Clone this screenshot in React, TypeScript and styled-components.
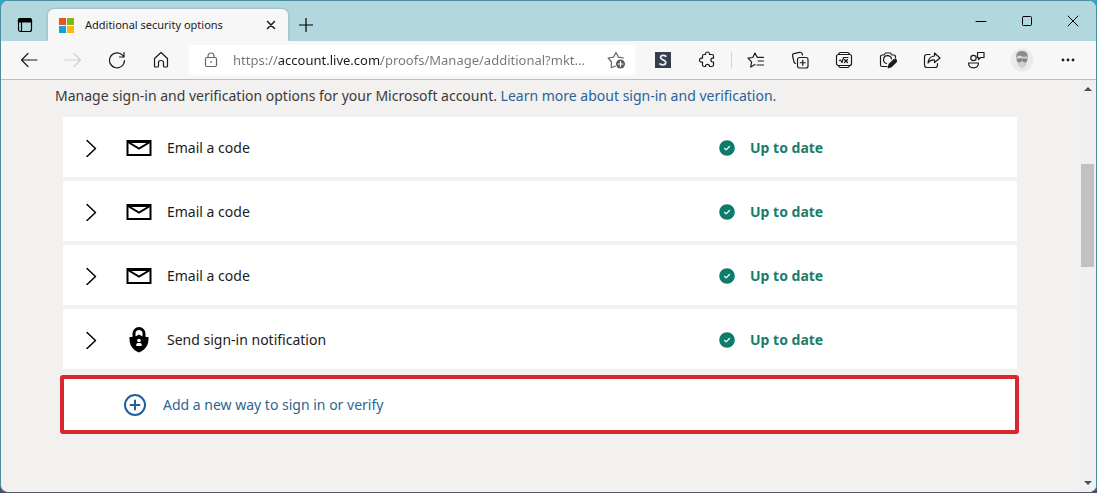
import React from "react";
import styled, { createGlobalStyle } from "styled-components";

const GlobalStyle = createGlobalStyle`
  *, *::before, *::after { box-sizing: border-box; }
  body {
    margin: 0;
    background: linear-gradient(#2fa9d0, #3f6f86 50%, #4b5068);
    font-family: "Noto Sans", "Open Sans", sans-serif;
    font-size: 14px;
    line-height: 20px;
    color: #1b1b1b;
  }
  button {
    font: inherit;
    color: inherit;
    border: 0;
    padding: 0;
    background: none;
  }
  svg { display: block; flex: none; }
`;

const BrowserWindow = styled.div`
  min-height: 100vh;
  display: flex;
  flex-direction: column;
  overflow: hidden;
  border: 1px solid #4a8ea0;
  border-bottom-color: #55566c;
  border-radius: 8px;
  background: #f2f1f0;
`;

const TitleBar = styled.header`
  display: flex;
  align-items: flex-end;
  height: 40px;
  background: #b2d7df;
`;

const TitleButton = styled.button<{ $width: number }>`
  display: flex;
  align-items: center;
  justify-content: center;
  width: ${(p) => p.$width}px;
  height: 32px;
`;

const Tab = styled.div`
  display: flex;
  align-items: center;
  width: 240px;
  height: 32px;
  padding: 0 8px 0 11px;
  border-radius: 6px 6px 0 0;
  background: #f7f7f7;
  box-shadow: 0 0 3px rgba(0, 60, 80, 0.3);
`;

const TabTitle = styled.span`
  flex: 1;
  margin-left: 11px;
  font-size: 11px;
  line-height: 16px;
  white-space: nowrap;
`;

const TabClose = styled.button`
  display: flex;
  align-items: center;
  justify-content: center;
  width: 18px;
  height: 18px;
`;

const WindowControls = styled.div`
  display: flex;
  align-self: flex-start;
  height: 40px;
  margin-left: auto;
`;

const WindowButton = styled.button`
  display: flex;
  align-items: center;
  justify-content: center;
  width: 46px;
  height: 40px;
`;

const Toolbar = styled.nav`
  display: flex;
  align-items: center;
  height: 39px;
  padding: 0 6px;
  border-bottom: 1px solid #b5c0c0;
  background: #f7f7f7;
`;

const ToolButton = styled.button`
  display: flex;
  align-items: center;
  justify-content: center;
  flex: none;
  width: 44px;
  height: 32px;
`;

const Divider = styled.span`
  width: 1px;
  height: 16px;
  margin: 0 2px;
  background: #d4d4d4;
`;

const AccountGroup = styled.div`
  display: flex;
  gap: 2px;
  margin-left: 2px;
`;

const AddressBar = styled.div`
  display: flex;
  align-items: center;
  flex: 1;
  min-width: 0;
  height: 30px;
  margin: 0 6px;
  padding: 0 10px 0 14px;
  border-radius: 4px;
  background: #ffffff;
`;

const AddressInput = styled.input`
  flex: 1;
  min-width: 0;
  margin: 0 10px 0 14px;
  padding: 0;
  border: 0;
  outline: 0;
  font: inherit;
  font-size: 13px;
  color: transparent;
  background: linear-gradient(to right, #757575 45px, #1b1b1b 45px 148px, #757575 148px);
  background-clip: text;
  -webkit-background-clip: text;
`;

const IconButton = styled.button`
  display: flex;
`;

const Viewport = styled.div`
  display: flex;
  flex: 1;
`;

const Page = styled.main`
  flex: 1;
  min-width: 0;
  padding: 6px 62px 58px;
`;

const Intro = styled.p`
  margin: 0 -8px 11px;
  color: #3b3a39;
`;

const Link = styled.a`
  color: #2a6299;
  text-decoration: none;
`;

const Methods = styled.ul`
  display: flex;
  flex-direction: column;
  gap: 4px;
  margin: 0;
  padding: 0;
  list-style: none;
`;

const MethodRow = styled.button`
  display: flex;
  align-items: center;
  width: 100%;
  height: 60px;
  padding: 2px 0 0 22px;
  background: #ffffff;
  text-align: left;
`;

const MethodIcon = styled.span`
  display: flex;
  justify-content: center;
  width: 26px;
  margin: 0 15px 0 29px;
`;

const MethodName = styled.span`
  flex: 1;
`;

const Status = styled.span`
  display: flex;
  align-items: center;
  flex: 0 0 298px;
  gap: 15px;
  font-weight: 700;
  color: #1b7c6a;
`;

const AddMethod = styled.a`
  display: flex;
  align-items: center;
  gap: 16px;
  height: 59px;
  margin: 6px -2px 0 -3px;
  padding-left: 59px;
  border: 4px solid #d9272f;
  border-radius: 3px;
  background: #ffffff;
  color: #2f6591;
  text-decoration: none;
`;

const Scrollbar = styled.div`
  display: flex;
  flex-direction: column;
  align-items: center;
  width: 17px;
  background: #f0f0f0;
`;

const ScrollArrow = styled.button`
  display: flex;
  align-items: center;
  justify-content: center;
  width: 17px;
  height: 18px;
`;

const ScrollTrack = styled.div`
  display: flex;
  flex-direction: column;
  flex: 1;
  padding-top: 66px;
`;

const ScrollThumb = styled.div`
  width: 13px;
  height: 103px;
  background: #c1c1c1;
`;

type IconProps = {
  width?: number;
  height?: number;
  box?: string;
  color?: string;
  stroke?: number;
  children: React.ReactNode;
};

const Icon = ({ width = 18, height = width, box, color = "#1b1b1b", stroke = 1.2, children }: IconProps) => (
  <svg
    width={width}
    height={height}
    viewBox={box ?? `0 0 ${width} ${height}`}
    fill="none"
    stroke={color}
    strokeWidth={stroke}
    strokeLinecap="round"
    strokeLinejoin="round"
    aria-hidden="true"
  >
    {children}
  </svg>
);

const EnvelopeIcon = () => (
  <Icon width={26} height={16} color="#000" stroke={2}>
    <path d="M1.5 1H24.5V15H1.5Z" strokeLinejoin="miter" />
    <path d="M2 2L13 8.500L24 2" strokeLinejoin="miter" />
    <path d="M1.500 1H24.500L22 3H4Z" fill="#000" stroke="none" />
  </Icon>
);

const LockShieldIcon = () => (
  <Icon width={20} height={26} color="#000" stroke={3}>
    <path d="M5 10V6.5a5 5 0 0 1 10 0V10" strokeLinecap="butt" />
    <path d="M10 7.5C7.500 9.500 3.500 10 .5 10C.2 17 2.500 22.500 10 25.500C17.500 22.500 19.800 17 19.500 10C16.500 10 12.500 9.500 10 7.500Z" fill="#000" stroke="none" />
    <circle cx="10" cy="13.500" r="1.800" fill="#fff" stroke="none" />
    <path d="M7.300 19v-1.500q0-1.500 1.500-1.500h2.400q1.500 0 1.500 1.500V19Z" fill="#fff" stroke="none" />
  </Icon>
);

const methods = [
  { name: "Email a code", icon: <EnvelopeIcon /> },
  { name: "Email a code", icon: <EnvelopeIcon /> },
  { name: "Email a code", icon: <EnvelopeIcon /> },
  { name: "Send sign-in notification", icon: <LockShieldIcon /> },
];

const Method = ({ name, icon }: { name: string; icon: React.ReactNode }) => (
  <li>
    <MethodRow type="button" aria-expanded="false">
      <Icon width={12} height={18} stroke={1.5} color="#000">
        <path d="M2 1.500L10.500 9.500L2 17.500" />
      </Icon>
      <MethodIcon>{icon}</MethodIcon>
      <MethodName>{name}</MethodName>
      <Status>
        <Icon width={16} color="#fff">
          <circle cx="8" cy="8" r="7.800" fill="#0f7c6b" stroke="none" />
          <path d="M5.500 8.300L7.200 9.900L10.500 6.500" />
        </Icon>
        Up to date
      </Status>
    </MethodRow>
  </li>
);

const Tabs = () => (
  <TitleBar>
    <TitleButton $width={47} type="button" aria-label="Tab actions">
      <Icon width={16} color="#000">
        <rect x="1.500" y="1.500" width="13" height="13" rx="2" />
        <path d="M1.500 5V3.500q0-2 2-2h9q2 0 2 2V5Z" fill="#000" />
        <path d="M4.500 5v9" />
      </Icon>
    </TitleButton>
    <Tab>
      <Icon width={15} stroke={0}>
        <rect width="7" height="7" fill="#e8541e" />
        <rect x="8" width="7" height="7" fill="#80b916" />
        <rect y="8" width="7" height="7" fill="#10a0df" />
        <rect x="8" y="8" width="7" height="7" fill="#fdb813" />
      </Icon>
      <TabTitle>Additional security options</TabTitle>
      <TabClose type="button" aria-label="Close tab">
        <Icon width={10} stroke={1.500}>
          <path d="M1.500 1.500L8.500 8.500M8.500 1.500L1.500 8.500" />
        </Icon>
      </TabClose>
    </Tab>
    <TitleButton $width={36} type="button" aria-label="New tab">
      <Icon width={14} color="#000">
        <path d="M7 .5V13.500M.5 7H13.500" />
      </Icon>
    </TitleButton>
    <WindowControls>
      <WindowButton type="button" aria-label="Minimize">
        <Icon width={12} stroke={1} color="#000">
          <path d="M1 6.500H11" />
        </Icon>
      </WindowButton>
      <WindowButton type="button" aria-label="Maximize">
        <Icon width={12} stroke={1} color="#000">
          <rect x="1.500" y="1.500" width="9" height="9" rx="1" />
        </Icon>
      </WindowButton>
      <WindowButton type="button" aria-label="Close">
        <Icon width={12} stroke={1} color="#000">
          <path d="M1 1L11 11M11 1L1 11" />
        </Icon>
      </WindowButton>
    </WindowControls>
  </TitleBar>
);

const Tools = () => (
  <Toolbar aria-label="Browser toolbar">
    <ToolButton type="button" aria-label="Back">
      <Icon>
        <path d="M17 9H1.500M8 2.500L1.500 9L8 15.500" />
      </Icon>
    </ToolButton>
    <ToolButton type="button" aria-label="Forward" disabled>
      <Icon color="#cfcfcf">
        <path d="M1 9H16.500M10 2.500L16.500 9L10 15.500" />
      </Icon>
    </ToolButton>
    <ToolButton type="button" aria-label="Refresh">
      <Icon>
        <path d="M16.500 9.500A7.500 7.500 0 1 1 14.500 4.200L16 6M16 1.500V6H11.500" />
      </Icon>
    </ToolButton>
    <ToolButton type="button" aria-label="Home">
      <Icon>
        <path d="M2.500 7.500L9 1.500L15.500 7.500V15q0 1-1 1H12.500q-1 0-1-1V11.500q0-2-2.500-2t-2.500 2V15q0 1-1 1H3.500q-1 0-1-1Z" />
      </Icon>
    </ToolButton>
    <AddressBar>
      <Icon width={16} color="#666">
        <rect x="2.500" y="5.500" width="11" height="9" rx="1.500" />
        <path d="M5 5.500V4a3 3 0 0 1 6 0V5.500" />
        <circle cx="8" cy="10" r=".6" fill="#666" stroke="#666" strokeWidth=".5" />
      </Icon>
      <AddressInput
        type="text"
        aria-label="Address"
        spellCheck={false}
        defaultValue="https://account.live.com/proofs/Manage/additional?mkt..."
      />
      <IconButton type="button" aria-label="Add this page to favorites">
        <Icon color="#666">
          <path d="M8.500 15L4.200 16.700L4.500 11L1.200 7L6.500 6.200L9 1.500L11.500 6.200L16.500 7" />
          <circle cx="13.500" cy="13" r="4.500" fill="#5c5c5c" stroke="none" />
          <path d="M13.500 10.700V15.300M11.200 13H15.800" stroke="#fff" />
        </Icon>
      </IconButton>
    </AddressBar>
    <ToolButton type="button" aria-label="S extension">
      <Icon width={16} color="#e8edf2" stroke={1.800}>
        <rect width="16" height="16" fill="#353f4c" stroke="none" />
        <path d="M10.800 4.200C9 2.800 5.500 3.200 5.500 5.500C5.500 8.300 10.800 7.500 10.800 10.500C10.800 13 7.500 13.400 5 12" />
      </Icon>
    </ToolButton>
    <ToolButton type="button" aria-label="Extensions">
      <Icon>
        <path d="M4.500 5Q4.500 3.500 6 3.500H7.500V3a2 2 0 0 1 4 0V3.500H14Q15.500 3.500 15.500 5V7.200H14.800a1.900 1.900 0 0 0 0 3.800H15.500V14Q15.500 15.500 14 15.500H11.500V15.300a2 2 0 0 0 -4 0V15.500H6Q4.500 15.500 4.500 14V11.200H3.500a2 2 0 0 1 0-4H4.500Z" />
      </Icon>
    </ToolButton>
    <Divider />
    <ToolButton type="button" aria-label="Favorites">
      <Icon>
        <path d="M8 13.500L3.700 16L4.600 10.800L1 7.200L5.800 6.500L8 2L10.200 6.300H16.500M11 10H16.500M10 14H16.500" />
      </Icon>
    </ToolButton>
    <ToolButton type="button" aria-label="Collections">
      <Icon>
        <rect x="6.500" y="6.500" width="10.500" height="10.500" rx="2" />
        <path d="M4.500 12.500Q3.300 12.300 3 11L1.500 4.500Q1.200 3 2.700 2.600L8.700 1.300Q10.500 1 11 2.500L11.500 4M11.750 9.200V14.300M9.200 11.750H14.300" />
      </Icon>
    </ToolButton>
    <ToolButton type="button" aria-label="Math solver">
      <Icon>
        <rect x="1.500" y="3.500" width="15" height="11" rx="2" />
        <path d="M3.500 3.500Q4 1.500 5.500 1.500H12.500Q14 1.500 14.500 3.500M3.500 14.500Q4 16.500 5.500 16.500H12.500Q14 16.500 14.500 14.500M4.500 9.500L5.500 9L7 11.500L8.500 6.500H13M9.500 8.500L12.500 11.500M12.500 8.500L9.500 11.500" />
      </Icon>
    </ToolButton>
    <ToolButton type="button" aria-label="Web capture">
      <Icon>
        <path d="M8 15.500H3q-1.500 0-1.500-1.500V5.500Q1.500 4 3 4H5L6.500 2H11.500L13 4H15q1.500 0 1.500 1.500V7M7.500 12.500A4 4 0 1 1 12.500 8" />
        <path d="M9.200 16.800L10.200 13.200L15 8.600Q16.300 7.800 17.200 8.800Q18 9.800 17 11L12.500 15.700Z" fill="#1b1b1b" />
      </Icon>
    </ToolButton>
    <ToolButton type="button" aria-label="Share">
      <Icon>
        <path d="M7 3.500H4Q1.500 3.500 1.500 6V14Q1.500 16.500 4 16.500H12Q14.500 16.500 14.500 14V12.500" />
        <path d="M11.500 2L17 7L11.500 11.500V9Q7.500 8.500 5 12Q5.500 5.500 11.500 5Z" />
      </Icon>
    </ToolButton>
    <ToolButton type="button" aria-label="Send feedback">
      <Icon>
        <circle cx="6.500" cy="7" r="2.700" />
        <path d="M1.500 12H11.500Q11.500 16.800 6.500 16.800T1.500 12ZM10.500 1.500H17V6.500H13.500L11.500 8.500V6.500H10.500Z" />
      </Icon>
    </ToolButton>
    <AccountGroup>
      <ToolButton type="button" aria-label="Profile">
        <Icon width={24} stroke={0}>
          <circle cx="12" cy="12" r="11.500" fill="#e9ebed" />
          <path d="M7 9H17V14Q16.500 19 12 20Q7.500 19 7 14Z" fill="#d0d0d0" />
          <path d="M6.200 10Q5.500 3 12 3Q18.500 3 17.800 10L16.500 8.500Q12 9.500 9.500 7.500L7.500 8.500Z" fill="#8c8c8c" />
          <path d="M6.500 10.500H17.500V12Q16.500 14.500 14.500 14.500Q12.800 14.500 12.300 12.500H11.700Q11.200 14.500 9.500 14.500Q7.500 14.500 6.500 12Z" fill="#858585" />
        </Icon>
      </ToolButton>
      <ToolButton type="button" aria-label="Settings and more">
        <Icon stroke={0}>
          <g fill="#1b1b1b">
            <circle cx="4" cy="9" r="1.400" />
            <circle cx="9" cy="9" r="1.400" />
            <circle cx="14" cy="9" r="1.400" />
          </g>
        </Icon>
      </ToolButton>
    </AccountGroup>
  </Toolbar>
);

export default function App() {
  return (
    <>
      <GlobalStyle />
      <BrowserWindow>
        <Tabs />
        <Tools />
        <Viewport>
          <Page>
            <Intro>
              Manage sign-in and verification options for your Microsoft account.{" "}
              <Link href="#learn">Learn more about sign-in and verification.</Link>
            </Intro>
            <Methods>
              {methods.map((method, index) => (
                <Method key={index} {...method} />
              ))}
            </Methods>
            <AddMethod href="#add">
              <Icon width={24} color="#22609a" stroke={2}>
                <circle cx="12" cy="12" r="10" />
                <path d="M12 7.500V16.500M7.500 12H16.500" />
              </Icon>
              Add a new way to sign in or verify
            </AddMethod>
          </Page>
          <Scrollbar>
            <ScrollArrow type="button" aria-label="Scroll up">
              <Icon width={8} height={4} stroke={0}>
                <path d="M4 0L8 4H0Z" fill="#505050" />
              </Icon>
            </ScrollArrow>
            <ScrollTrack>
              <ScrollThumb />
            </ScrollTrack>
            <ScrollArrow type="button" aria-label="Scroll down">
              <Icon width={8} height={4} stroke={0}>
                <path d="M0 0H8L4 4Z" fill="#505050" />
              </Icon>
            </ScrollArrow>
          </Scrollbar>
        </Viewport>
      </BrowserWindow>
    </>
  );
}
